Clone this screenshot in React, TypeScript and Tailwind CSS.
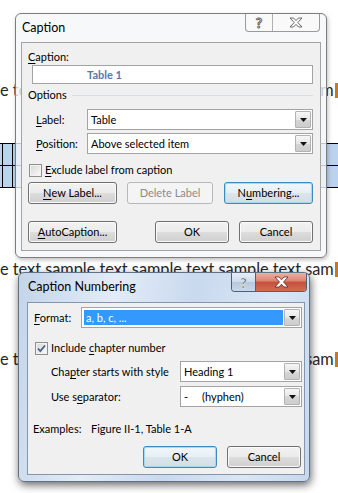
import React from "react";

type Kids = { children?: React.ReactNode };

function Key({ children }: Kids) {
  return <span className="underline underline-offset-[2px]">{children}</span>;
}

function Arrow() {
  return (
    <div className="w-[16px] m-[1px] flex items-center justify-center border border-[#b2b2b2] rounded-[1px] bg-[linear-gradient(#f6f6f6,#e6e6e6_50%,#d6d6d6_50%,#cdcdcd)]">
      <svg width="7" height="4" viewBox="0 0 7 4">
        <path d="M0 0h7L3.5 4z" fill="#111" />
      </svg>
    </div>
  );
}

function Select({ className, children, selected }: Kids & { className: string; selected?: boolean }) {
  return (
    <div className={`h-[21px] shrink-0 flex bg-white border border-[#a3a3a3] ${className}`}>
      {selected ? (
        <div className="flex-1 my-[2px] ml-[2px] flex items-center pl-[2px] bg-[#3399ff] text-white">{children}</div>
      ) : (
        <div className="flex-1 flex items-center pl-[3px]">{children}</div>
      )}
      <Arrow />
    </div>
  );
}

function Check({ checked }: { checked?: boolean }) {
  return (
    <div className="w-[13px] h-[13px] shrink-0 flex items-center justify-center border border-[#8e8f8f] bg-[linear-gradient(135deg,#d6d6d6,#fbfbfb)] shadow-[inset_0_0_0_1px_#f2f2f2]">
      {checked && (
        <svg width="9" height="9" viewBox="0 0 9 9">
          <path d="M1 4.5l2.3 2.6L8 1.5" stroke="#4c5f86" strokeWidth="1.8" fill="none" />
        </svg>
      )}
    </div>
  );
}

function Btn({ className, children, kind = "normal" }: Kids & { className: string; kind?: "normal" | "default" | "disabled" }) {
  const look =
    kind === "default"
      ? "border-[#3c8cbc] shadow-[inset_0_0_0_1px_#9fdbf7] bg-[linear-gradient(#f0f6fa,#e8eff4_50%,#dbe5ec_50%,#d2dde5)] text-black"
      : kind === "disabled"
        ? "border-[#b5b9bc] bg-[#f4f4f4] text-[#8b8b8b]"
        : "border-[#707070] shadow-[inset_0_0_0_1px_#fbfbfb] bg-[linear-gradient(#f2f2f2,#ebebeb_50%,#dddddd_50%,#cfcfcf)] text-black";
  return (
    <div className={`h-[22px] shrink-0 flex items-center justify-center rounded-[3px] border ${look} ${className}`}>
      {children}
    </div>
  );
}

function DocLine({ className }: { className: string }) {
  return (
    <div className={`absolute left-0 w-[338px] h-[20px] flex items-center whitespace-nowrap text-[16.3px] leading-[20px] text-[#262626] ${className}`}>
      <span>e text sample text sample text sample text sam</span>
      <span className="ml-[1px] shrink-0 w-[5px] h-[15px] bg-[#c27a28]" />
    </div>
  );
}

function CaptionDialog() {
  return (
    <div className="absolute left-[15px] top-[13px] w-[312px] h-[245px] flex flex-col rounded-[6px] border border-[#7d7d7d] bg-[#f4f6f9]/80 shadow-[1px_2px_4px_rgba(0,0,0,0.25)]">
      <div className="h-[28px] w-[310px] flex items-start">
        <div className="pl-[6px] pt-[6px] text-[12.5px] leading-[16px] text-black">Caption</div>
        <div className="ml-auto mr-[6px] flex h-[18px] rounded-b-[4px] border border-t-0 border-[#9a9a9a] bg-[#f9f9f9]">
          <div className="w-[27px] flex items-center justify-center border-r border-[#b0b0b0] text-[14px] font-bold text-transparent [-webkit-text-stroke:1px_#6a6a6a]">?</div>
          <div className="w-[46px] flex items-center justify-center">
            <svg width="14" height="11" viewBox="0 0 14 11">
              <path d="M1 1h3.5L7 3.6 9.5 1H13L8.8 5.5 13 10H9.5L7 7.4 4.5 10H1l4.2-4.5z" fill="none" stroke="#6a6a6a" strokeWidth="1" />
            </svg>
          </div>
        </div>
      </div>
      <div className="ml-[5px] w-[300px] h-[209px] flex flex-col border border-[#a3a3a3] bg-[#f0f0f0] text-[11px] leading-[16px] text-black">
        <div className="pl-[6px] pt-[6px]">
          <Key>C</Key>aption:
        </div>
        <div className="ml-[10px] w-[281px] h-[19px] flex items-center pl-[54px] bg-white border border-[#a3a3a3] font-bold text-[#5679ad]">
          Table 1
        </div>
        <div className="mt-[3px] pl-[6px] flex items-center">
          <span className="w-[44px]">Options</span>
          <span className="w-[241px] h-px bg-[#d8dde3]" />
        </div>
        <div className="mt-[6px] flex items-center">
          <span className="pl-[14px] w-[65px]">
            <Key>L</Key>abel:
          </span>
          <Select className="w-[226px]">Table</Select>
        </div>
        <div className="mt-[3px] flex items-center">
          <span className="pl-[14px] w-[65px]">
            <Key>P</Key>osition:
          </span>
          <Select className="w-[226px]">Above selected item</Select>
        </div>
        <div className="mt-[8px] pl-[7px] flex items-center gap-[3px]">
          <Check />
          <span>
            <Key>E</Key>xclude label from caption
          </span>
        </div>
        <div className="mt-[4px] pl-[6px] flex">
          <Btn className="w-[89px]">
            <Key>N</Key>ew Label...
          </Btn>
          <Btn className="ml-[10px] w-[86px]" kind="disabled">Delete Label</Btn>
          <Btn className="ml-[11px] w-[89px]" kind="default">
            N<Key>u</Key>mbering...
          </Btn>
        </div>
        <div className="mt-[17px] pl-[6px] flex">
          <Btn className="w-[89px]">
            <Key>A</Key>utoCaption...
          </Btn>
          <Btn className="ml-[38px] w-[74px]">OK</Btn>
          <Btn className="ml-[10px] w-[74px]">Cancel</Btn>
        </div>
      </div>
    </div>
  );
}

function NumberingDialog() {
  return (
    <div className="absolute left-[18px] top-[272px] w-[292px] h-[210px] flex flex-col rounded-[6px] border border-[#5f7185] bg-[linear-gradient(100deg,#c3d4ea_0%,#e3ecf7_30%,#c9d9ee_55%,#dbe6f4_80%,#c7d7ec_100%)] shadow-[1px_3px_8px_rgba(0,0,0,0.6)]">
      <div className="h-[29px] w-[290px] flex items-start">
        <div className="pl-[9px] pt-[6px] text-[12.5px] leading-[16px] text-black">Caption Numbering</div>
        <div className="ml-auto mr-[2px] flex h-[19px] rounded-b-[4px] border border-t-0 border-[#4e5f78] overflow-hidden">
          <div className="w-[24px] flex items-center justify-center border-r border-[#4e5f78] bg-[linear-gradient(#e6edf6,#cfdbeb_50%,#b7c8de_50%,#c9d8eb)] text-[14px] font-bold text-[#3d4a5c] [-webkit-text-stroke:0.5px_#f4f7fb]">?</div>
          <div className="w-[50px] flex items-center justify-center bg-[linear-gradient(#eab1a5,#d98473_45%,#c5503c_50%,#d26b53)]">
            <svg width="15" height="12" viewBox="0 0 15 12">
              <path d="M1 1h4L7.5 3.8 10 1h4L9.5 6 14 11h-4L7.5 8.2 5 11H1l4.5-5z" fill="#fff" stroke="#5a2b25" strokeWidth="0.8" />
            </svg>
          </div>
        </div>
      </div>
      <div className="ml-[8px] w-[278px] h-[173px] flex flex-col border border-[#8296b0] bg-[#f0f0f0] text-[11px] leading-[16px] text-black">
        <div className="mt-[4px] flex items-center">
          <span className="pl-[6px] w-[53px]">
            <Key>F</Key>ormat:
          </span>
          <Select className="w-[221px]" selected>
            a, b, c, ...
          </Select>
        </div>
        <div className="mt-[12px] pl-[7px] flex items-center gap-[3px]">
          <Check checked />
          <span>
            Include <Key>c</Key>hapter number
          </span>
        </div>
        <div className="mt-[5px] flex items-center">
          <span className="pl-[23px] w-[152px]">
            Cha<Key>p</Key>ter starts with style
          </span>
          <Select className="w-[122px]">Heading 1</Select>
        </div>
        <div className="mt-[4px] flex items-center">
          <span className="pl-[23px] w-[152px]">
            Use s<Key>e</Key>parator:
          </span>
          <Select className="w-[122px]">
            <span>-</span>
            <span className="ml-[14px]">(hyphen)</span>
          </Select>
        </div>
        <div className="mt-[14px] pl-[5px] flex">
          <span className="w-[58px]">Examples:</span>
          <span>Figure II-1, Table 1-A</span>
        </div>
        <div className="mt-[9px] flex">
          <Btn className="ml-[115px] w-[74px]" kind="default">OK</Btn>
          <Btn className="ml-[10px] w-[74px]">Cancel</Btn>
        </div>
      </div>
    </div>
  );
}

export default function App() {
  return (
    <div className="relative w-[338px] h-[493px] overflow-hidden bg-white font-[Lato,'Liberation_Sans',sans-serif]">
      <DocLine className="top-[80px]" />
      <DocLine className="top-[259px]" />
      <DocLine className="top-[349px]" />

      <div className="absolute left-[-40px] top-[143px] w-[420px] flex flex-col bg-[#bcd3ef] border-t border-black">
        {[0, 1].map((r) => (
          <div key={r} className="h-[22px] flex border-b border-black">
            <div className="w-[43px] border-r border-black" />
            <div className="w-[10px] border-r border-black" />
            <div className="flex-1" />
          </div>
        ))}
      </div>

      <CaptionDialog />
      <NumberingDialog />
    </div>
  );
}
